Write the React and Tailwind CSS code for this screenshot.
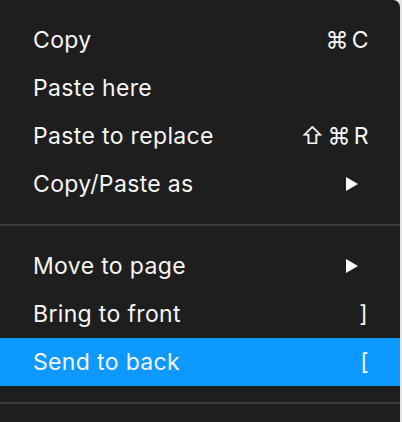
import React from "react";

const Tri = () => (
  <svg width="12" height="14" viewBox="0 0 12 14" className="mr-[11px]">
    <path d="M0 0 L12 7 L0 14 Z" fill="#ffffff" />
  </svg>
);

const Row = ({ label, right, active }) => (
  <div
    className={`flex h-[48px] items-center justify-between pl-[33px] pr-[31px] ${
      active ? "bg-[#0d99ff]" : ""
    }`}
  >
    <span>{label}</span>
    <span className="flex items-center gap-[3px]">{right}</span>
  </div>
);

const Sep = () => (
  <div className="py-[16px]">
    <div className="h-[2px] bg-[#3a3a3a]" />
  </div>
);

export default function App() {
  return (
    <div className="h-[422px] w-[402px] overflow-hidden bg-[#e4e4e4]">
      <div
        className="h-[422px] w-[400px] rounded-tr-[7px] bg-[#1e1e1e] pt-[16px] text-[23px] tracking-[0.015em] text-[#f5f5f5]"
        style={{ fontFamily: "Inter, 'DejaVu Sans', sans-serif" }}
      >
        <Row label="Copy" right={<><span className="text-[23px]">⌘</span><span>C</span></>} />
        <Row label="Paste here" />
        <Row
          label="Paste to replace"
          right={<><span className="text-[23px]">⇧</span><span className="text-[23px]">⌘</span><span>R</span></>}
        />
        <Row label="Copy/Paste as" right={<Tri />} />
        <Sep />
        <Row label="Move to page" right={<Tri />} />
        <Row label="Bring to front" right={<span className="mr-[1px]">]</span>} />
        <Row label="Send to back" right={<span>[</span>} active />
        <Sep />
      </div>
    </div>
  );
}
